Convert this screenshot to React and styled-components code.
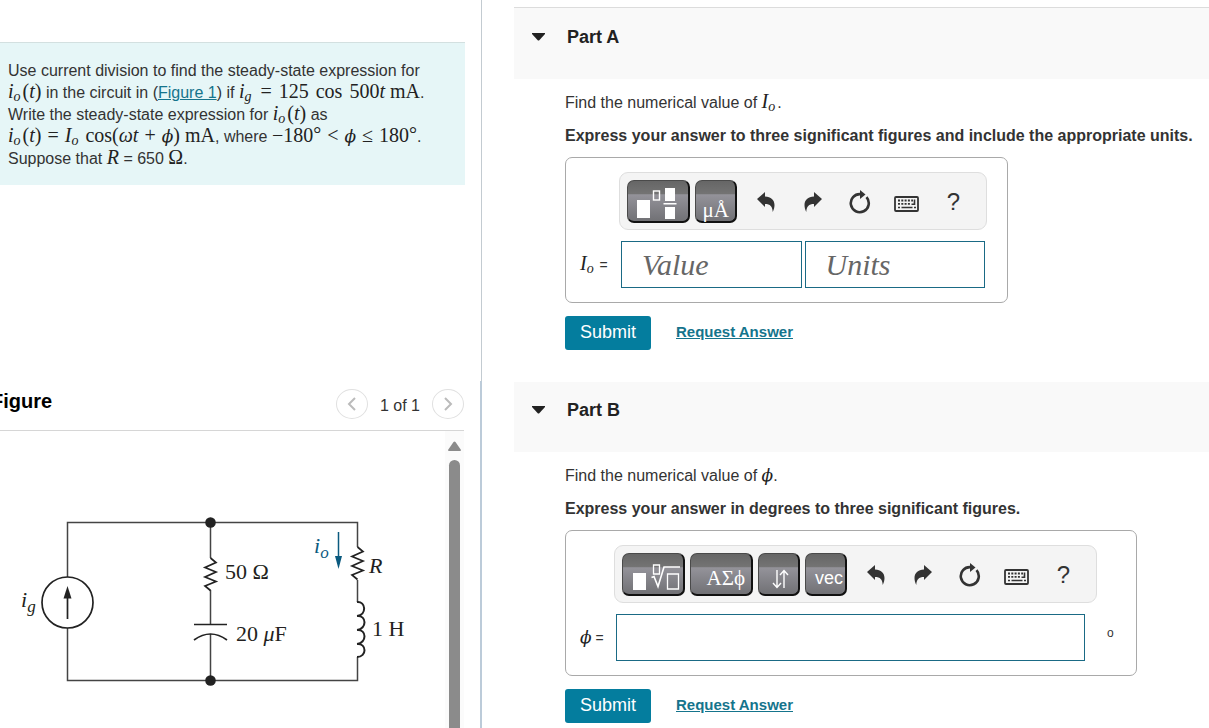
import styled, { createGlobalStyle } from "styled-components";

const GlobalStyle = createGlobalStyle`
* { box-sizing: border-box; }
body {
    margin: 0;
    background: #ffffff;
    color: #333333;
    font-family: "Liberation Sans", Arial, sans-serif;
    font-size: 16px;
    line-height: 22px;
}
button, input { font-family: inherit; }
p, h2 { margin: 0; }
`

const Page = styled.div`
display: grid;
grid-template-columns: 482px minmax(0, 1fr);
height: 100vh;
overflow: hidden;
`

const Left = styled.div`
display: flex;
flex-direction: column;
min-height: 0;
`

const ProblemPane = styled.section`
flex: 0 0 381px;
padding: 42px 16px 0 0;
border-right: 1px solid #c3cbd1;
`

const Problem = styled.div`
padding: 17px 8px 15px;
border-top: 1px solid #d3e0e0;
background: #e6f6f7;
`

const Line = styled.div`
height: 22px;
white-space: nowrap;
`

const A = styled.a`
color: #15748c;
`

const M = styled.span`
font-family: "Liberation Serif", "Times New Roman", serif;
font-size: 20px;
line-height: 0;
color: #222222;
sub {
    font-size: 14px;
    line-height: 0;
    font-style: italic;
    vertical-align: -3px;
    margin-right: 2px;
}
sup {
    font-size: 20px;
    line-height: 0;
    vertical-align: 1px;
}
i.phi { font-family: "DejaVu Serif", serif; font-size: 17px; }
`

const Op = styled.span`
margin: 0 ${p => p.$gap || 6}px;
`

const FigurePane = styled.section`
flex: 1;
min-height: 0;
display: flex;
flex-direction: column;
padding-right: 16px;
border-right: 2px solid #bccbd9;
`

const FigureHead = styled.div`
display: flex;
align-items: center;
height: 50px;
flex: none;
border-bottom: 1px solid #d6d6d6;
overflow: hidden;
h2 {
    flex: 1;
    margin-left: -9px;
    padding-bottom: 10px;
    color: #000000;
    font-size: 20px;
}
`

const Pager = styled.div`
display: flex;
align-items: center;
gap: 12px;
`

const RoundBtn = styled.button`
display: flex;
align-items: center;
justify-content: center;
width: 32px;
height: 30px;
padding: 0;
margin-bottom: 4px;
border: 1px solid #e0e0e0;
border-radius: 50%;
background: #ffffff;
`

const FigureBody = styled.div`
display: flex;
flex: 1;
min-height: 0;
overflow: hidden;
`

const Drawing = styled.div`
flex: 1;
padding-top: 69px;
svg { display: block; }
text {
    font-family: "Liberation Serif", "Times New Roman", serif;
    font-size: 22px;
    fill: #231f20;
}
.it { font-style: italic; }
.small { font-size: 17px; }
.blue { fill: #0b5a7f; }
`

const Scroll = styled.div`
display: flex;
flex-direction: column;
align-items: center;
gap: 9px;
width: 19px;
padding-top: 10px;
background: #fbfbfb;
`

const Thumb = styled.div`
flex: 1;
width: 11px;
border-radius: 6px 6px 0 0;
background: #8b8b8b;
`

const Right = styled.main`
min-width: 0;
padding: 7px 0 0 32px;
`

const PartHead = styled.header`
display: flex;
align-items: center;
gap: 22px;
height: ${p => p.$line ? 72 : 70}px;
padding: 0 18px 14px;
background: #f9f9f9;
border-top: ${p => p.$line ? "1px solid #dcdcdc" : "0"};
h2 {
    font-size: 18px;
    color: #222222;
}
`

const PartBody = styled.div`
padding: 13px 0 32px 51px;
`

const Ask = styled.p`
white-space: nowrap;
`

const Hint = styled.p`
margin-top: 11px;
font-weight: bold;
white-space: nowrap;
`

const AnswerBox = styled.div`
display: grid;
grid-template-columns: ${p => p.$label}px auto auto;
align-items: center;
row-gap: 11px;
width: fit-content;
height: 146px;
margin: 10px 0 13px;
padding: 14px 20px 14px 14px;
border: 1px solid #a9a9a9;
border-radius: 7px;
`

const Toolbar = styled.div`
grid-column: 2;
display: flex;
align-items: center;
gap: 5px;
height: 58px;
padding: 0 9px 0 7px;
border: 1px solid #dedede;
border-radius: 9px;
background: #f4f4f4;
`

const Glyph = styled.button`
display: flex;
align-items: flex-end;
justify-content: flex-end;
width: ${p => p.$wide ? 63 : 42}px;
height: 43px;
padding: 0 ${p => p.$serif ? 6 : 2}px 1px 0;
border: 1px solid #4a4a4a;
border-right: 2px solid #111111;
border-bottom: 2px solid #111111;
border-radius: 7px;
background: linear-gradient(#666666 0, #747474 33%, #94939a 34%, #717175 100%);
color: #ffffff;
font-family: ${p => p.$serif ? '"Liberation Serif", serif' : "inherit"};
font-size: ${p => p.$serif ? 21 : 18}px;
line-height: ${p => p.$low ? 20 : 30}px;
svg { display: block; flex: none; }
`

const Tools = styled.div`
display: flex;
`

const Tool = styled.button`
display: flex;
align-items: center;
justify-content: center;
width: 47px;
height: 40px;
padding: 2px 0 0;
border: 0;
background: transparent;
color: #333333;
font-size: 24px;
`

const Label = styled.label`
grid-column: 1;
white-space: nowrap;
font-size: 14px;
`

const Fields = styled.div`
grid-column: 2;
display: flex;
gap: 3px;
padding: 0 ${p => p.$inset || 2}px 0 2px;
`

const Field = styled.input`
flex: 1;
min-width: 0;
width: 100px;
height: 47px;
padding: 0 20px;
border: 1px solid #1a6a85;
background: #ffffff;
font-family: "Liberation Serif", "Times New Roman", serif;
font-size: 30px;
&::placeholder {
    color: #666666;
    font-style: italic;
    opacity: 1;
}
`

const Unit = styled.span`
width: 19px;
padding: 0 0 10px 10px;
font-size: 12px;
`

const Actions = styled.div`
display: flex;
align-items: center;
gap: 25px;
`

const Submit = styled.button`
width: 86px;
height: 34px;
padding: 0 0 2px;
border: 0;
border-radius: 3px;
background: #047d9e;
color: #ffffff;
font-size: 18px;
`

const Request = styled.a`
padding-bottom: 2px;
color: #15748c;
font-size: 15px;
font-weight: bold;
`

const Caret = () => (
    <svg width="13" height="8" viewBox="0 0 13 8"><path d="M0 0h13v1L7.5 7q-1 1-2 0L0 1z" fill="#222" /></svg>
)

const Undo = () => (
    <svg width="18" height="20" viewBox="0 0 18 20"><path d="M0 7 8 0v4.500C14 4.800 17.500 8 17.500 13c0 2.500-.6 4.500-1.800 7-.2-5.500-2.500-8-7.700-8v3z" fill="#333" /></svg>
)

const Redo = () => (
    <svg width="18" height="20" viewBox="0 0 18 20"><path d="M18 7 10 0v4.500C4 4.800.5 8 .5 13c0 2.500.6 4.500 1.800 7 .2-5.500 2.500-8 7.700-8v3z" fill="#333" /></svg>
)

const Reset = () => (
    <svg width="22" height="24" viewBox="0 0 22 24">
        <path d="M17.500 7.200a9 9 0 1 1-6-3" fill="none" stroke="#333" strokeWidth="2.600" />
        <path d="M11 0 16.500 4.500 11 9z" fill="#333" />
    </svg>
)

const Keys = () => (
    <svg width="25" height="20" viewBox="0 -4 25 20">
        <rect x="1" y="1" width="23" height="14" rx="1" fill="none" stroke="#333" strokeWidth="1.800" />
        <path d="M4 4.500h15M4 7.800h13" stroke="#333" strokeWidth="1.800" strokeDasharray="2 1.300" />
        <path d="M4 11.500h2m1.500 0h11m1.500 0h2M20.500 3.600v4.600h-3" fill="none" stroke="#333" strokeWidth="1.600" />
    </svg>
)

const FractionIcon = () => (
    <svg width="55" height="36" viewBox="0 0 55 36" fill="#fff">
        <path d="M6 16h13v18H6zM34 4h10v13H34zM34 23h10v12H34zM32.500 19h13v1.500h-13z" />
        <rect x="22.500" y="7" width="6" height="9" fill="none" stroke="#fff" strokeWidth="1.400" />
    </svg>
)

const RootIcon = () => (
    <svg width="55" height="36" viewBox="0 0 55 36">
        <path d="M7 16h13v17H7z" fill="#fff" />
        <path d="M25.500 20.500l2.500-1 4 10 6-19.500h16" fill="none" stroke="#fff" strokeWidth="1.600" />
        <path d="M27.500 8h6v9h-6zM41.500 17h11v15h-11z" fill="none" stroke="#fff" strokeWidth="1.300" />
    </svg>
)

const ArrowsIcon = () => (
    <svg width="30" height="26" viewBox="0 0 28 26" fill="none" stroke="#fff" strokeWidth="1.400">
        <path d="M10 3v17M6 16l4 4.500 4-4.500M17 21V4M13 8l4-4.500 4 4.500" />
    </svg>
)

const CommonTools = () => (
    <Tools>
        <Tool type="button" aria-label="undo"><Undo /></Tool>
        <Tool type="button" aria-label="redo"><Redo /></Tool>
        <Tool type="button" aria-label="reset"><Reset /></Tool>
        <Tool type="button" aria-label="keyboard shortcuts"><Keys /></Tool>
        <Tool type="button" aria-label="help">?</Tool>
    </Tools>
)

const Circuit = () => (
    <svg width="440" height="228" viewBox="0 500 440 228" fill="none" stroke="#444" strokeWidth="1.500">
        <path d="M67.500 577V522.500H357.500V547M67.500 628V680.500H357.500V657" />
        <path d="M210.500 522v36M210.500 590v34M210.500 634v46M357.500 580v22" />
        <g stroke="#222" strokeWidth="1.700">
            <circle cx="67.500" cy="602.500" r="25.500" />
            <path d="M67.500 619v-24M194 624.500h33M194 640q16.500-12 33 0" />
            <path d="M210.500 558l5.500 4.500-11 5 11 4.500-11 5 11 4.500-11 4.500 5.500 4.500" />
            <path d="M357.500 547l5.500 4.500-11 5 11 4.500-11 5 11 4.500-11 4.500 5.500 4.500" />
            <path strokeWidth="2" d="M357 602c9-1 10 13 0 14 10-1 10 13 0 14 10-1 10 13 0 14 10-1 10 13 0 13" />
        </g>
        <path d="M67.500 586l4 12.500h-8z" fill="#222" stroke="none" />
        <circle cx="210.500" cy="522.500" r="5.300" fill="#222" stroke="none" />
        <circle cx="210.500" cy="680.500" r="5.300" fill="#222" stroke="none" />
        <path d="M338.500 532v26" stroke="#0b5a7f" />
        <path d="M338.500 569l-3.500-13h7z" fill="#0b5a7f" stroke="none" />
        <g stroke="none">
            <text x="21" y="607" className="it">i<tspan className="small" dy="5">g</tspan></text>
            <text x="314" y="553" className="it blue">i<tspan className="small blue" dy="5">o</tspan></text>
            <text x="225" y="579">50 Ω</text>
            <text x="236" y="641">20 <tspan className="it">μ</tspan>F</text>
            <text x="369" y="573" className="it">R</text>
            <text x="372" y="636">1 H</text>
        </g>
    </svg>
)

const Io = () => <M><i>i</i><sub>o</sub>(<i>t</i>)</M>

const Send = () => (
    <Actions>
        <Submit type="button">Submit</Submit>
        <Request href="#answer">Request Answer</Request>
    </Actions>
)

const App = () => {
    return (
        <>
            <GlobalStyle />
            <Page>
                <Left>
                    <ProblemPane>
                        <Problem>
                            <Line>Use current division to find the steady-state expression for</Line>
                            <Line>
                                <Io /> in the circuit in (<A href="#figure">Figure 1</A>) if <M><i>i</i><sub>g</sub><Op $gap={7}>=</Op>125<Op $gap={7}>cos</Op>500<i>t</i> mA</M>.
                            </Line>
                            <Line>Write the steady-state expression for <Io /> as</Line>
                            <Line>
                                <Io /><M><Op>=</Op><i>I</i><sub>o</sub> cos(<i>ωt</i><Op>+</Op><i className="phi">ϕ</i>) mA</M>, where <M>−180<sup>°</sup><Op>&lt;</Op><i className="phi">ϕ</i><Op>≤</Op>180<sup>°</sup></M>.
                            </Line>
                            <Line>Suppose that <M><i>R</i></M> = 650 <M>Ω</M>.</Line>
                        </Problem>
                    </ProblemPane>
                    <FigurePane id="figure">
                        <FigureHead>
                            <h2>Figure</h2>
                            <Pager>
                                <RoundBtn type="button" aria-label="previous">
                                    <svg width="10" height="14" viewBox="0 0 10 14"><path d="M8 1 2 7l6 6" fill="none" stroke="#bbb" strokeWidth="2" /></svg>
                                </RoundBtn>
                                <span>1 of 1</span>
                                <RoundBtn type="button" aria-label="next">
                                    <svg width="10" height="14" viewBox="0 0 10 14"><path d="M2 1l6 6-6 6" fill="none" stroke="#bbb" strokeWidth="2" /></svg>
                                </RoundBtn>
                            </Pager>
                        </FigureHead>
                        <FigureBody>
                            <Drawing><Circuit /></Drawing>
                            <Scroll>
                                <svg width="13" height="10" viewBox="0 0 13 10"><path d="M5.500 1q1-1 2 0L13 9q0 1-1 1H1q-1 0-1-1z" fill="#8b8b8b" /></svg>
                                <Thumb />
                            </Scroll>
                        </FigureBody>
                    </FigurePane>
                </Left>
                <Right>
                    <PartHead $line><Caret /><h2>Part A</h2></PartHead>
                    <PartBody>
                        <Ask>Find the numerical value of <M><i>I</i><sub>o</sub></M>.</Ask>
                        <Hint>Express your answer to three significant figures and include the appropriate units.</Hint>
                        <AnswerBox $label={39}>
                            <Toolbar>
                                <Glyph type="button" $wide aria-label="templates"><FractionIcon /></Glyph>
                                <Glyph type="button" $serif $low>μÅ</Glyph>
                                <CommonTools />
                            </Toolbar>
                            <Label htmlFor="value"><M><i>I</i><sub>o</sub></M> =</Label>
                            <Fields>
                                <Field id="value" placeholder="Value" />
                                <Field aria-label="Units" placeholder="Units" />
                            </Fields>
                        </AnswerBox>
                        <Send />
                    </PartBody>
                    <PartHead><Caret /><h2>Part B</h2></PartHead>
                    <PartBody>
                        <Ask>Find the numerical value of <M><i className="phi">ϕ</i></M>.</Ask>
                        <Hint>Express your answer in degrees to three significant figures.</Hint>
                        <AnswerBox $label={34}>
                            <Toolbar>
                                <Glyph type="button" $wide aria-label="root templates"><RootIcon /></Glyph>
                                <Glyph type="button" $wide $serif>ΑΣϕ</Glyph>
                                <Glyph type="button" aria-label="arrows"><ArrowsIcon /></Glyph>
                                <Glyph type="button">vec</Glyph>
                                <CommonTools />
                            </Toolbar>
                            <Label htmlFor="phi"><M><i className="phi">ϕ</i></M> =</Label>
                            <Fields $inset={12}><Field id="phi" /></Fields>
                            <Unit>o</Unit>
                        </AnswerBox>
                        <Send />
                    </PartBody>
                </Right>
            </Page>
        </>
    )
}
export default App;
